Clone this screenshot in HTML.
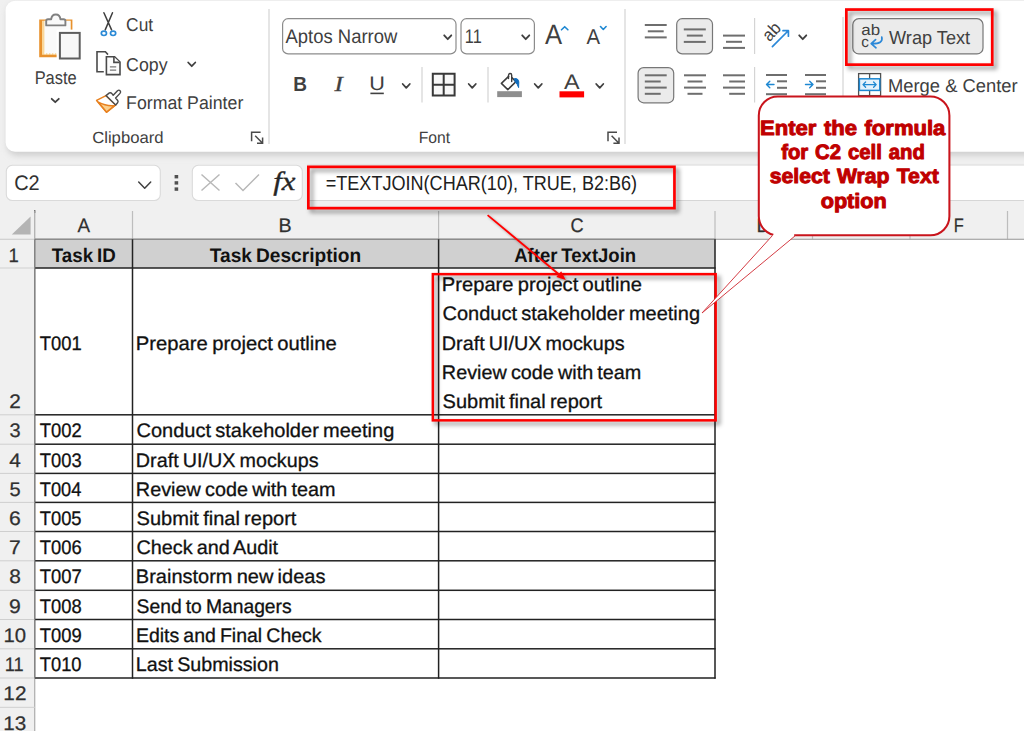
<!DOCTYPE html>
<html lang="en"><head><meta charset="utf-8"><title>TEXTJOIN with CHAR(10) and Wrap Text</title>
<style>
html,body{margin:0;padding:0;background:#f0f0f0;overflow:hidden}
body{width:1024px;height:731px}
svg{display:block;font-family:"Liberation Sans",Arial,sans-serif;text-rendering:geometricPrecision}
</style></head><body>
<svg width="1024" height="731" viewBox="0 0 1024 731">
<defs>
<filter id="blur4" x="-5%" y="-20%" width="110%" height="140%"><feGaussianBlur stdDeviation="3.2"/></filter>
<filter id="blur2" x="-10%" y="-30%" width="120%" height="160%"><feGaussianBlur stdDeviation="2.3"/></filter>
<filter id="ash" x="-20%" y="-20%" width="150%" height="150%"><feDropShadow dx="1.5" dy="1.5" stdDeviation="1.2" flood-color="#000" flood-opacity=".35"/></filter>
</defs>
<rect width="1024" height="731" fill="#f0f0f0"/>
<rect x="7" y="3" width="1060" height="152.5" rx="10" fill="#cecece" filter="url(#blur4)"/>
<rect x="5.6" y="0.8" width="1060" height="151" rx="9.5" fill="#fff"/>
<rect x="268.4" y="9" width="1.2" height="135" fill="#d4d4d4"/>
<rect x="624.4" y="9" width="1.2" height="135" fill="#d4d4d4"/>
<rect x="842.4" y="17" width="1.2" height="127" fill="#d4d4d4"/>
<g id="paste"><path d="M39.2 19.4 H72.4 V57.2 H39.2 Z" fill="#e8912d"/><path d="M42 20.8 H70.6 V54.8 H42 Z" fill="#fad79a"/><path d="M44.4 20.8 H70.6 V53.2 H44.4 Z" fill="#fafafa"/><path d="M44.4 53.4 h26" stroke="#fafafa" stroke-width="1.6" stroke-dasharray="1.5 1.5"/><path d="M46.2 25.4 V21 Q46.2 19.2 48 19.2 H51.2 Q51.6 14.5 55.8 14.5 Q60 14.5 60.4 19.2 H63.6 Q65.4 19.2 65.4 21 V25.4 Z" fill="#f9f9f9" stroke="#808080" stroke-width="1.9" stroke-linejoin="round"/><rect x="56.6" y="29.6" width="26" height="32" fill="#fff"/><rect x="59.9" y="32.9" width="19.8" height="25.6" fill="#f8f8f8" stroke="#5e5e5e" stroke-width="2"/></g>
<text x="34.65" y="84.00" font-size="18.5" textLength="42.08" lengthAdjust="spacingAndGlyphs" fill="#404040">Paste</text>
<path d="M51.70 98.80 L55.25 102.20 L58.80 98.80" fill="none" stroke="#404040" stroke-width="1.8" stroke-linecap="round" stroke-linejoin="round"/>
<g id="cut" fill="none" stroke-linecap="round"><path d="M103.9 12.7 L111.6 29.9 M112.5 12.7 L105.2 29.9" stroke="#3e3e3e" stroke-width="1.5"/><ellipse cx="103.9" cy="33.3" rx="2.6" ry="2.2" stroke="#2b8ad6" stroke-width="1.7"/><ellipse cx="113.1" cy="33.3" rx="2.6" ry="2.2" stroke="#2b8ad6" stroke-width="1.7"/></g>
<text x="126.12" y="31.30" font-size="18.5" textLength="27.01" lengthAdjust="spacingAndGlyphs" fill="#404040">Cut</text>
<g id="copy" fill="none" stroke="#4a4a4a" stroke-width="1.6"><path d="M103.8 71.8 H97 V51.8 H105.4 L108 54.6"/><path d="M106.4 56.8 H114.6 L120 62 V74.6 H106.4 Z" fill="#fcfcfc"/><path d="M113.9 57 V62.4 H119.8" fill="#fff"/><path d="M109.9 66.9 H116.2 M109.9 70.1 H116.2" stroke="#787878" stroke-width="1.4"/></g>
<text x="126.10" y="70.50" font-size="18.5" textLength="41.44" lengthAdjust="spacingAndGlyphs" fill="#404040">Copy</text>
<path d="M188.20 62.50 L191.75 66.20 L195.30 62.50" fill="none" stroke="#404040" stroke-width="1.8" stroke-linecap="round" stroke-linejoin="round"/>
<g id="fp" stroke-linejoin="round"><path d="M96.6 100.4 L106 95.6 L115.7 105 L106.5 112.3 Z" fill="#fff" stroke="#e8801e" stroke-width="1.5"/><path d="M98.4 102.2 Q106 106.4 114.6 105.6 L106.5 112 Z" fill="#fbcf8c" stroke="#e8801e" stroke-width="1.4"/><path d="M106 95.6 L109.4 92.9 Q110.8 92.2 111.9 93.6 L113.2 95.3 L117.5 90.7 Q119 89.5 120.1 90.8 Q121.2 92.1 120 93.4 L115.6 98 L117.7 100.5 Q118.5 101.6 117.6 102.7 L115.7 105 Z" fill="#fff" stroke="#4a4a4a" stroke-width="1.4"/></g>
<text x="126.05" y="109.00" font-size="18.5" textLength="117.25" lengthAdjust="spacingAndGlyphs" fill="#404040">Format Painter</text>
<text x="92.15" y="142.50" font-size="16.3" textLength="71.42" lengthAdjust="spacingAndGlyphs" fill="#404040">Clipboard</text>
<path d="M251.6 141.2 V132.2 H260.6" fill="none" stroke="#4a4a4a" stroke-width="1.5"/><path d="M255.2 135.79999999999998 L262.6 143.2 M262.6 137.6 V143.2 H257.0" fill="none" stroke="#4a4a4a" stroke-width="1.5"/>
<rect x="282.6" y="18.7" width="173.4" height="35.2" rx="5.5" fill="#fff" stroke="#8c8c8c" stroke-width="1.2"/>
<rect x="461" y="18.7" width="73.4" height="35.2" rx="5.5" fill="#fff" stroke="#8c8c8c" stroke-width="1.2"/>
<text x="285.56" y="43.40" font-size="19.7" textLength="111.69" lengthAdjust="spacingAndGlyphs" fill="#404040">Aptos Narrow</text>
<path d="M444.20 35.30 L447.75 39.20 L451.30 35.30" fill="none" stroke="#404040" stroke-width="1.8" stroke-linecap="round" stroke-linejoin="round"/>
<text x="464.84" y="43.40" font-size="19.7" textLength="16.90" lengthAdjust="spacingAndGlyphs" fill="#404040">11</text>
<path d="M522.20 35.30 L525.75 39.20 L529.30 35.30" fill="none" stroke="#404040" stroke-width="1.8" stroke-linecap="round" stroke-linejoin="round"/>
<text x="293.33" y="90.80" font-size="20.4" textLength="13.74" lengthAdjust="spacingAndGlyphs" fill="#404040" font-weight="bold">B</text>
<text x="334.60" y="90.80" font-size="21.5" textLength="8.41" lengthAdjust="spacingAndGlyphs" fill="#404040" font-style="italic" font-family='"Liberation Serif", "Times New Roman", serif' stroke="#404040" stroke-width=".3">I</text>
<text x="369.33" y="90.30" font-size="19.5" textLength="15.64" lengthAdjust="spacingAndGlyphs" fill="#404040">U</text>
<rect x="370.4" y="92.6" width="13.4" height="1.6" fill="#404040"/>
<path d="M402.70 84.00 L406.25 87.90 L409.80 84.00" fill="none" stroke="#404040" stroke-width="1.8" stroke-linecap="round" stroke-linejoin="round"/>
<rect x="421.4" y="67" width="1.2" height="35.5" fill="#d4d4d4"/>
<rect x="487.4" y="67" width="1.2" height="35.5" fill="#d4d4d4"/>
<path d="M432.8 73.8 H454.6 V95.6 H432.8 Z M443.7 73.8 V95.6 M432.8 84.7 H454.6" fill="#f8f8f8" stroke="#383838" stroke-width="2"/>
<path d="M468.70 84.00 L472.25 87.90 L475.80 84.00" fill="none" stroke="#404040" stroke-width="1.8" stroke-linecap="round" stroke-linejoin="round"/>
<g id="fill" stroke-linejoin="round" stroke-linecap="round"><path d="M508.6 76.4 L501.4 83.4 L507.8 89.6 L516 81.6 L511.8 77.6" fill="#fff" stroke="#3c3c3c" stroke-width="1.5"/><path d="M508.5 78.6 V75.2 Q508.6 73.5 510.2 73.5 Q511.7 73.5 511.7 75.2 V81.6" fill="none" stroke="#3c3c3c" stroke-width="1.4"/><path d="M514.6 78.6 Q518.4 78 518.8 82 L518.6 87.6 Q517.4 83.6 515.4 82 Z" fill="#0f6cbd" stroke="#0f6cbd" stroke-width="1"/><rect x="497.2" y="91.2" width="24.7" height="5.9" fill="#8e8e8e"/></g>
<path d="M534.70 84.00 L538.25 87.90 L541.80 84.00" fill="none" stroke="#404040" stroke-width="1.8" stroke-linecap="round" stroke-linejoin="round"/>
<text x="563.95" y="89.00" font-size="21" textLength="15.59" lengthAdjust="spacingAndGlyphs" fill="#404040">A</text>
<rect x="559.5" y="91.3" width="24.6" height="6.1" fill="#ff0000"/>
<path d="M596.20 84.00 L599.75 87.90 L603.30 84.00" fill="none" stroke="#404040" stroke-width="1.8" stroke-linecap="round" stroke-linejoin="round"/>
<text x="544.95" y="44.40" font-size="28" textLength="17.10" lengthAdjust="spacingAndGlyphs" fill="#404040">A</text>
<path d="M561.50 29.80 L564.70 26.70 L567.90 29.80" fill="none" stroke="#1e88d2" stroke-width="1.6" stroke-linecap="round" stroke-linejoin="round"/>
<text x="586.46" y="44.40" font-size="21.5" textLength="13.58" lengthAdjust="spacingAndGlyphs" fill="#404040">A</text>
<path d="M600.50 26.50 L603.30 29.50 L606.10 26.50" fill="none" stroke="#1e88d2" stroke-width="1.6" stroke-linecap="round" stroke-linejoin="round"/>
<text x="418.71" y="142.50" font-size="16.3" textLength="31.40" lengthAdjust="spacingAndGlyphs" fill="#404040">Font</text>
<path d="M608 141.2 V132.2 H617" fill="none" stroke="#4a4a4a" stroke-width="1.5"/><path d="M611.6 135.79999999999998 L619 143.2 M619 137.6 V143.2 H613.4" fill="none" stroke="#4a4a4a" stroke-width="1.5"/>
<rect x="676.7" y="18.7" width="35.8" height="35.2" rx="5.5" fill="#ebebeb" stroke="#777" stroke-width="1.2"/>
<rect x="638.1" y="67.6" width="35.6" height="35.2" rx="5.5" fill="#ebebeb" stroke="#777" stroke-width="1.2"/>
<rect x="644.8" y="24.0" width="21.90000000000009" height="2.0" fill="#6e6e6e"/><rect x="647.8" y="30.3" width="15.900000000000091" height="2.0" fill="#6e6e6e"/><rect x="644.8" y="36.4" width="21.90000000000009" height="2.0" fill="#6e6e6e"/>
<rect x="683.8" y="28.4" width="22.0" height="2.0" fill="#6e6e6e"/><rect x="686.8" y="34.6" width="16.0" height="2.0" fill="#6e6e6e"/><rect x="683.8" y="40.9" width="22.0" height="2.0" fill="#6e6e6e"/>
<rect x="723" y="34.6" width="22" height="2.0" fill="#6e6e6e"/><rect x="726.0" y="40.8" width="16.0" height="2.0" fill="#6e6e6e"/><rect x="723" y="46.9" width="22" height="2.0" fill="#6e6e6e"/>
<rect x="644.8" y="74.3" width="21.90000000000009" height="2.0" fill="#6e6e6e"/><rect x="644.8" y="80.5" width="15.900000000000091" height="2.0" fill="#6e6e6e"/><rect x="644.8" y="86.6" width="21.90000000000009" height="2.0" fill="#6e6e6e"/><rect x="644.8" y="92.8" width="15.900000000000091" height="2.0" fill="#6e6e6e"/>
<rect x="684" y="74.3" width="22" height="2.0" fill="#6e6e6e"/><rect x="687.5" y="80.5" width="15.0" height="2.0" fill="#6e6e6e"/><rect x="684" y="86.6" width="22" height="2.0" fill="#6e6e6e"/><rect x="687.5" y="92.8" width="15.0" height="2.0" fill="#6e6e6e"/>
<rect x="723" y="74.3" width="22" height="2.0" fill="#6e6e6e"/><rect x="729.2" y="80.5" width="15.799999999999955" height="2.0" fill="#6e6e6e"/><rect x="723" y="86.6" width="22" height="2.0" fill="#6e6e6e"/><rect x="729.2" y="92.8" width="15.799999999999955" height="2.0" fill="#6e6e6e"/>
<rect x="754" y="18" width="1.2" height="36" fill="#d4d4d4"/>
<rect x="754" y="67" width="1.2" height="35.5" fill="#d4d4d4"/>
<text transform="translate(769.6 42.2) rotate(-47)" font-size="17.5" fill="#404040" textLength="18.2" lengthAdjust="spacingAndGlyphs">ab</text>
<path d="M772.4 46.6 L788 31 M783 30.7 H788.4 V36.2" fill="none" stroke="#2b88d8" stroke-width="1.7" stroke-linecap="round" stroke-linejoin="round"/>
<path d="M799.20 35.30 L802.75 39.20 L806.30 35.30" fill="none" stroke="#404040" stroke-width="1.8" stroke-linecap="round" stroke-linejoin="round"/>
<rect x="766" y="74.0" width="21" height="2.0" fill="#6e6e6e"/><rect x="766" y="93.2" width="21" height="2.0" fill="#6e6e6e"/><rect x="777" y="80.3" width="10" height="2.0" fill="#6e6e6e"/><rect x="777" y="86.8" width="10" height="2.0" fill="#6e6e6e"/><path d="M774 84.5 H766.5 M769.8 81.2 L766.5 84.5 L769.8 87.8" fill="none" stroke="#1e88d2" stroke-width="1.4" stroke-linecap="round" stroke-linejoin="round"/>
<rect x="805" y="74.0" width="21" height="2.0" fill="#6e6e6e"/><rect x="805" y="93.2" width="21" height="2.0" fill="#6e6e6e"/><rect x="816" y="80.3" width="10" height="2.0" fill="#6e6e6e"/><rect x="816" y="86.8" width="10" height="2.0" fill="#6e6e6e"/><path d="M805.5 84.5 H813 M809.7 81.2 L813 84.5 L809.7 87.8" fill="none" stroke="#1e88d2" stroke-width="1.4" stroke-linecap="round" stroke-linejoin="round"/>
<rect x="852.8" y="18.7" width="130.2" height="35.2" rx="6" fill="#ebebeb" stroke="#777" stroke-width="1.2"/>
<text x="861.28" y="35.40" font-size="15.3" textLength="18.83" lengthAdjust="spacingAndGlyphs" fill="#404040">ab</text>
<text x="861.35" y="46.60" font-size="15.3" textLength="7.65" lengthAdjust="spacingAndGlyphs" fill="#404040">c</text>
<path d="M881.8 37.2 Q883.4 43.9 872 43.7 M875.6 39.6 L871.2 43.7 L876 47.8" fill="none" stroke="#2b88d8" stroke-width="1.7" stroke-linecap="round" stroke-linejoin="round"/>
<text x="889.02" y="43.70" font-size="18.8" textLength="81.11" lengthAdjust="spacingAndGlyphs" fill="#404040">Wrap Text</text>
<g id="merge"><rect x="858.6" y="73.6" width="22" height="22" fill="#fff" stroke="#505050" stroke-width="1.3"/><path d="M869.6 73.6 V78.8 M869.6 90.4 V95.6" stroke="#505050" stroke-width="1.3"/><rect x="859.4" y="78.8" width="20.4" height="11.6" fill="#e6f2fb" stroke="#1e88d2" stroke-width="1.5"/><path d="M863 84.6 H876.2 M865.6 82 L863 84.6 L865.6 87.2 M873.6 82 L876.2 84.6 L873.6 87.2" fill="none" stroke="#1e88d2" stroke-width="1.3" stroke-linecap="round" stroke-linejoin="round"/></g>
<text x="887.99" y="92.20" font-size="18.5" textLength="129.61" lengthAdjust="spacingAndGlyphs" fill="#404040">Merge &amp; Center</text>
<rect x="6.3" y="165.3" width="154" height="35.2" rx="6" fill="#fff" stroke="#dadada" stroke-width="1.1"/>
<text x="14.19" y="189.80" font-size="21" textLength="25.52" lengthAdjust="spacingAndGlyphs" fill="#303030">C2</text>
<path d="M138.70 182.00 L144.70 188.20 L150.70 182.00" fill="none" stroke="#404040" stroke-width="1.5" stroke-linecap="round" stroke-linejoin="round"/>
<rect x="174.6" y="175" width="3.6" height="3.4" fill="#505050"/>
<rect x="174.6" y="181.2" width="3.6" height="3.4" fill="#505050"/>
<rect x="174.6" y="187.4" width="3.6" height="3.4" fill="#505050"/>
<rect x="192.3" y="165.3" width="110" height="35.2" rx="6" fill="#fff" stroke="#dadada" stroke-width="1.1"/>
<path d="M201.5 174.5 L219.5 190.5 M219.5 174.5 L201.5 190.5" stroke="#b8b8b8" stroke-width="1.5" fill="none"/>
<path d="M235.5 183 L243 190.5 L259 174.5" stroke="#b8b8b8" stroke-width="1.5" fill="none"/>
<text x="273.15" y="189.80" font-size="26.5" textLength="22.27" lengthAdjust="spacingAndGlyphs" fill="#262626" font-style="italic" font-family='"Liberation Serif", "Times New Roman", serif' stroke="#262626" stroke-width=".35">fx</text>
<rect x="307" y="164.6" width="730" height="36.4" fill="#d6d6d6"/>
<rect x="307" y="165.5" width="730" height="34.5" fill="#fff"/>
<text x="325.72" y="189.70" font-size="20.4" textLength="311.40" lengthAdjust="spacingAndGlyphs" fill="#202020">=TEXTJOIN(CHAR(10), TRUE, B2:B6)</text>
<rect x="35" y="239.3" width="1000" height="500" fill="#fff"/>
<text x="77.41" y="232.00" font-size="19.6" textLength="12.57" lengthAdjust="spacingAndGlyphs" fill="#303030" stroke="#303030" stroke-width=".25">A</text>
<text x="278.43" y="232.00" font-size="19.6" textLength="13.16" lengthAdjust="spacingAndGlyphs" fill="#303030" stroke="#303030" stroke-width=".25">B</text>
<text x="570.53" y="232.00" font-size="19.6" textLength="13.11" lengthAdjust="spacingAndGlyphs" fill="#303030" stroke="#303030" stroke-width=".25">C</text>
<text x="756.46" y="232.00" font-size="19.6" textLength="14.02" lengthAdjust="spacingAndGlyphs" fill="#303030" stroke="#303030" stroke-width=".25">D</text>
<text x="855.76" y="232.00" font-size="19.6" textLength="10.46" lengthAdjust="spacingAndGlyphs" fill="#303030" stroke="#303030" stroke-width=".25">E</text>
<text x="953.66" y="232.00" font-size="19.6" textLength="10.00" lengthAdjust="spacingAndGlyphs" fill="#303030" stroke="#303030" stroke-width=".25">F</text>
<rect x="131.9" y="211" width="1.2" height="28.5" fill="#bdbdbd"/>
<rect x="438.0" y="211" width="1.2" height="28.5" fill="#bdbdbd"/>
<rect x="714.4" y="211" width="1.2" height="28.5" fill="#bdbdbd"/>
<rect x="811.9" y="211" width="1.2" height="28.5" fill="#bdbdbd"/>
<rect x="909.4" y="211" width="1.2" height="28.5" fill="#bdbdbd"/>
<rect x="1006.9" y="211" width="1.2" height="28.5" fill="#bdbdbd"/>
<rect x="34.3" y="210" width="1" height="3" fill="#444"/>
<path d="M30.6 216.5 V234.6 H11.8 Z" fill="#b4b4b4"/>
<rect x="0" y="238.7" width="35" height="1.2" fill="#cfcfcf"/>
<rect x="35" y="238.7" width="1024" height="1.2" fill="#a6a6a6"/>
<rect x="34.2" y="211" width="1.1" height="530" fill="#a6a6a6"/>
<rect x="0" y="267.5" width="35" height="1" fill="#cfcfcf"/>
<rect x="0" y="414.3" width="35" height="1" fill="#cfcfcf"/>
<rect x="0" y="443.7" width="35" height="1" fill="#cfcfcf"/>
<rect x="0" y="472.9" width="35" height="1" fill="#cfcfcf"/>
<rect x="0" y="501.9" width="35" height="1" fill="#cfcfcf"/>
<rect x="0" y="531.0" width="35" height="1" fill="#cfcfcf"/>
<rect x="0" y="560.3" width="35" height="1" fill="#cfcfcf"/>
<rect x="0" y="589.8" width="35" height="1" fill="#cfcfcf"/>
<rect x="0" y="619.0" width="35" height="1" fill="#cfcfcf"/>
<rect x="0" y="648.3" width="35" height="1" fill="#cfcfcf"/>
<rect x="0" y="677.5" width="35" height="1" fill="#cfcfcf"/>
<rect x="0" y="706.8" width="35" height="1" fill="#cfcfcf"/>
<rect x="0" y="736.1" width="35" height="1" fill="#cfcfcf"/>
<text x="8.59" y="261.80" font-size="19.6" textLength="10.32" lengthAdjust="spacingAndGlyphs" fill="#303030" stroke="#303030" stroke-width=".25">1</text>
<text x="9.20" y="407.90" font-size="19.6" textLength="11.60" lengthAdjust="spacingAndGlyphs" fill="#303030" stroke="#303030" stroke-width=".25">2</text>
<text x="9.49" y="437.30" font-size="19.6" textLength="11.14" lengthAdjust="spacingAndGlyphs" fill="#303030" stroke="#303030" stroke-width=".25">3</text>
<text x="9.27" y="466.50" font-size="19.6" textLength="11.59" lengthAdjust="spacingAndGlyphs" fill="#303030" stroke="#303030" stroke-width=".25">4</text>
<text x="9.45" y="495.50" font-size="19.6" textLength="11.14" lengthAdjust="spacingAndGlyphs" fill="#303030" stroke="#303030" stroke-width=".25">5</text>
<text x="9.02" y="524.60" font-size="19.6" textLength="11.81" lengthAdjust="spacingAndGlyphs" fill="#303030" stroke="#303030" stroke-width=".25">6</text>
<text x="9.12" y="553.90" font-size="19.6" textLength="11.74" lengthAdjust="spacingAndGlyphs" fill="#303030" stroke="#303030" stroke-width=".25">7</text>
<text x="9.19" y="583.40" font-size="19.6" textLength="11.62" lengthAdjust="spacingAndGlyphs" fill="#303030" stroke="#303030" stroke-width=".25">8</text>
<text x="9.11" y="612.60" font-size="19.6" textLength="11.80" lengthAdjust="spacingAndGlyphs" fill="#303030" stroke="#303030" stroke-width=".25">9</text>
<text x="3.50" y="641.90" font-size="19.6" textLength="22.65" lengthAdjust="spacingAndGlyphs" fill="#303030" stroke="#303030" stroke-width=".25">10</text>
<text x="4.70" y="671.10" font-size="19.6" textLength="18.93" lengthAdjust="spacingAndGlyphs" fill="#303030" stroke="#303030" stroke-width=".25">11</text>
<text x="3.37" y="700.40" font-size="19.6" textLength="23.13" lengthAdjust="spacingAndGlyphs" fill="#303030" stroke="#303030" stroke-width=".25">12</text>
<text x="3.38" y="729.70" font-size="19.6" textLength="22.98" lengthAdjust="spacingAndGlyphs" fill="#303030" stroke="#303030" stroke-width=".25">13</text>
<rect x="35" y="239.3" width="680" height="28.7" fill="#d0d0d0"/>
<rect x="35" y="238.6" width="680.6" height="1.3" fill="#858585"/>
<rect x="35" y="267.25" width="680.6" height="1.5" fill="#222"/>
<rect x="35" y="414.05" width="680.6" height="1.5" fill="#222"/>
<rect x="35" y="443.45" width="680.6" height="1.5" fill="#222"/>
<rect x="35" y="472.65" width="680.6" height="1.5" fill="#222"/>
<rect x="35" y="501.65" width="680.6" height="1.5" fill="#222"/>
<rect x="35" y="530.75" width="680.6" height="1.5" fill="#222"/>
<rect x="35" y="560.05" width="680.6" height="1.5" fill="#222"/>
<rect x="35" y="589.55" width="680.6" height="1.5" fill="#222"/>
<rect x="35" y="618.75" width="680.6" height="1.5" fill="#222"/>
<rect x="35" y="648.05" width="680.6" height="1.5" fill="#222"/>
<rect x="35" y="677.25" width="680.6" height="1.5" fill="#222"/>
<rect x="131.75" y="239.3" width="1.5" height="439.40" fill="#222"/>
<rect x="437.85" y="239.3" width="1.5" height="439.40" fill="#222"/>
<rect x="714.25" y="239.3" width="1.5" height="439.40" fill="#222"/>
<rect x="34.4" y="239.3" width="1" height="439.30" fill="#666"/>
<text x="51.79" y="261.50" font-size="19.6" textLength="63.98" lengthAdjust="spacingAndGlyphs" fill="#111" font-weight="bold" word-spacing="-1.3">Task ID</text>
<text x="209.79" y="261.50" font-size="19.6" textLength="151.39" lengthAdjust="spacingAndGlyphs" fill="#111" font-weight="bold" word-spacing="-1.3">Task Description</text>
<text x="514.24" y="261.50" font-size="19.6" textLength="121.89" lengthAdjust="spacingAndGlyphs" fill="#111" font-weight="bold" word-spacing="-1.3">After TextJoin</text>
<text x="39.79" y="349.50" font-size="19.6" textLength="41.91" lengthAdjust="spacingAndGlyphs" fill="#111" stroke="#111" stroke-width=".3" word-spacing="-1.3">T001</text>
<text x="135.84" y="349.50" font-size="19.6" textLength="201.06" lengthAdjust="spacingAndGlyphs" fill="#111" stroke="#111" stroke-width=".3" word-spacing="-1.3">Prepare project outline</text>
<text x="39.79" y="437.30" font-size="19.6" textLength="41.94" lengthAdjust="spacingAndGlyphs" fill="#111" stroke="#111" stroke-width=".3" word-spacing="-1.3">T002</text>
<text x="136.48" y="437.30" font-size="19.6" textLength="257.81" lengthAdjust="spacingAndGlyphs" fill="#111" stroke="#111" stroke-width=".3" word-spacing="-1.3">Conduct stakeholder meeting</text>
<text x="39.79" y="466.50" font-size="19.6" textLength="41.82" lengthAdjust="spacingAndGlyphs" fill="#111" stroke="#111" stroke-width=".3" word-spacing="-1.3">T003</text>
<text x="135.88" y="466.50" font-size="19.6" textLength="182.63" lengthAdjust="spacingAndGlyphs" fill="#111" stroke="#111" stroke-width=".3" word-spacing="-1.3">Draft UI/UX mockups</text>
<text x="39.79" y="495.50" font-size="19.6" textLength="41.54" lengthAdjust="spacingAndGlyphs" fill="#111" stroke="#111" stroke-width=".3" word-spacing="-1.3">T004</text>
<text x="135.88" y="495.50" font-size="19.6" textLength="199.73" lengthAdjust="spacingAndGlyphs" fill="#111" stroke="#111" stroke-width=".3" word-spacing="-1.3">Review code with team</text>
<text x="39.79" y="524.60" font-size="19.6" textLength="41.78" lengthAdjust="spacingAndGlyphs" fill="#111" stroke="#111" stroke-width=".3" word-spacing="-1.3">T005</text>
<text x="136.59" y="524.60" font-size="19.6" textLength="159.86" lengthAdjust="spacingAndGlyphs" fill="#111" stroke="#111" stroke-width=".3" word-spacing="-1.3">Submit final report</text>
<text x="39.79" y="553.90" font-size="19.6" textLength="41.82" lengthAdjust="spacingAndGlyphs" fill="#111" stroke="#111" stroke-width=".3" word-spacing="-1.3">T006</text>
<text x="136.50" y="553.90" font-size="19.6" textLength="141.64" lengthAdjust="spacingAndGlyphs" fill="#111" stroke="#111" stroke-width=".3" word-spacing="-1.3">Check and Audit</text>
<text x="39.79" y="583.40" font-size="19.6" textLength="41.94" lengthAdjust="spacingAndGlyphs" fill="#111" stroke="#111" stroke-width=".3" word-spacing="-1.3">T007</text>
<text x="135.86" y="583.40" font-size="19.6" textLength="189.56" lengthAdjust="spacingAndGlyphs" fill="#111" stroke="#111" stroke-width=".3" word-spacing="-1.3">Brainstorm new ideas</text>
<text x="39.79" y="612.60" font-size="19.6" textLength="41.81" lengthAdjust="spacingAndGlyphs" fill="#111" stroke="#111" stroke-width=".3" word-spacing="-1.3">T008</text>
<text x="136.62" y="612.60" font-size="19.6" textLength="155.07" lengthAdjust="spacingAndGlyphs" fill="#111" stroke="#111" stroke-width=".3" word-spacing="-1.3">Send to Managers</text>
<text x="39.79" y="641.90" font-size="19.6" textLength="41.88" lengthAdjust="spacingAndGlyphs" fill="#111" stroke="#111" stroke-width=".3" word-spacing="-1.3">T009</text>
<text x="135.90" y="641.90" font-size="19.6" textLength="185.67" lengthAdjust="spacingAndGlyphs" fill="#111" stroke="#111" stroke-width=".3" word-spacing="-1.3">Edits and Final Check</text>
<text x="39.79" y="671.10" font-size="19.6" textLength="41.73" lengthAdjust="spacingAndGlyphs" fill="#111" stroke="#111" stroke-width=".3" word-spacing="-1.3">T010</text>
<text x="135.89" y="671.10" font-size="19.6" textLength="142.99" lengthAdjust="spacingAndGlyphs" fill="#111" stroke="#111" stroke-width=".3" word-spacing="-1.3">Last Submission</text>
<text x="441.85" y="291.00" font-size="19.6" textLength="200.05" lengthAdjust="spacingAndGlyphs" fill="#111" stroke="#111" stroke-width=".3" word-spacing="-1.3">Prepare project outline</text>
<text x="442.48" y="320.40" font-size="19.6" textLength="257.61" lengthAdjust="spacingAndGlyphs" fill="#111" stroke="#111" stroke-width=".3" word-spacing="-1.3">Conduct stakeholder meeting</text>
<text x="441.88" y="349.60" font-size="19.6" textLength="182.63" lengthAdjust="spacingAndGlyphs" fill="#111" stroke="#111" stroke-width=".3" word-spacing="-1.3">Draft UI/UX mockups</text>
<text x="441.88" y="378.50" font-size="19.6" textLength="199.43" lengthAdjust="spacingAndGlyphs" fill="#111" stroke="#111" stroke-width=".3" word-spacing="-1.3">Review code with team</text>
<text x="442.59" y="407.50" font-size="19.6" textLength="159.55" lengthAdjust="spacingAndGlyphs" fill="#111" stroke="#111" stroke-width=".3" word-spacing="-1.3">Submit final report</text>
<rect x="846.35" y="9.549999999999999" width="145.90000000000003" height="55.099999999999994" fill="none" stroke="#000" stroke-opacity=".38" stroke-width="3.3000000000000003" transform="translate(3.2 3.2)" filter="url(#blur2)"/><rect x="846.35" y="9.549999999999999" width="145.90000000000003" height="55.099999999999994" fill="none" stroke="#ff0000" stroke-width="2.7"/>
<rect x="308.35" y="166.85" width="366.09999999999997" height="41.3" fill="none" stroke="#000" stroke-opacity=".38" stroke-width="3.3000000000000003" transform="translate(3.2 3.2)" filter="url(#blur2)"/><rect x="308.35" y="166.85" width="366.09999999999997" height="41.3" fill="none" stroke="#ff0000" stroke-width="2.7"/>
<rect x="432.85" y="274.15" width="282.79999999999995" height="146.20000000000005" fill="none" stroke="#000" stroke-opacity=".38" stroke-width="3.1" transform="translate(3.2 3.2)" filter="url(#blur2)"/><rect x="432.85" y="274.15" width="282.79999999999995" height="146.20000000000005" fill="none" stroke="#ff0000" stroke-width="2.5"/>
<g filter="url(#ash)"><path d="M487.6 215.1 L560 275.2" stroke="#ff0000" stroke-width="1.8" fill="none"/><path d="M565.8 280 L556.3 277 L561.2 271.2 Z" fill="#ff0000"/></g>
<rect x="758.8" y="96.4" width="190.6" height="138.9" rx="19" fill="#fff" stroke="#c9141c" stroke-width="2.05"/>
<path d="M773.4 233.4 H794.2 V236.5 L702 313 L773.4 234.7 Z" fill="#fff"/>
<path d="M772.4 235.6 L702 313 L795.4 235.6" fill="none" stroke="#d2323a" stroke-width=".95" stroke-linejoin="round"/>
<text x="760.02" y="134.60" font-size="20.8" textLength="185.34" lengthAdjust="spacingAndGlyphs" fill="#c00000" font-weight="bold" stroke="#c00000" stroke-width="1" paint-order="stroke" stroke-linejoin="round" word-spacing="1.3">Enter the formula</text>
<text x="781.15" y="159.00" font-size="20.8" textLength="143.69" lengthAdjust="spacingAndGlyphs" fill="#c00000" font-weight="bold" stroke="#c00000" stroke-width="1" paint-order="stroke" stroke-linejoin="round" word-spacing="1.3">for C2 cell and</text>
<text x="769.76" y="183.30" font-size="20.8" textLength="168.99" lengthAdjust="spacingAndGlyphs" fill="#c00000" font-weight="bold" stroke="#c00000" stroke-width="1" paint-order="stroke" stroke-linejoin="round" word-spacing="1.3">select Wrap Text</text>
<text x="820.65" y="207.70" font-size="20.8" textLength="66.19" lengthAdjust="spacingAndGlyphs" fill="#c00000" font-weight="bold" stroke="#c00000" stroke-width="1" paint-order="stroke" stroke-linejoin="round" word-spacing="1.3">option</text>
</svg>
</body></html>
